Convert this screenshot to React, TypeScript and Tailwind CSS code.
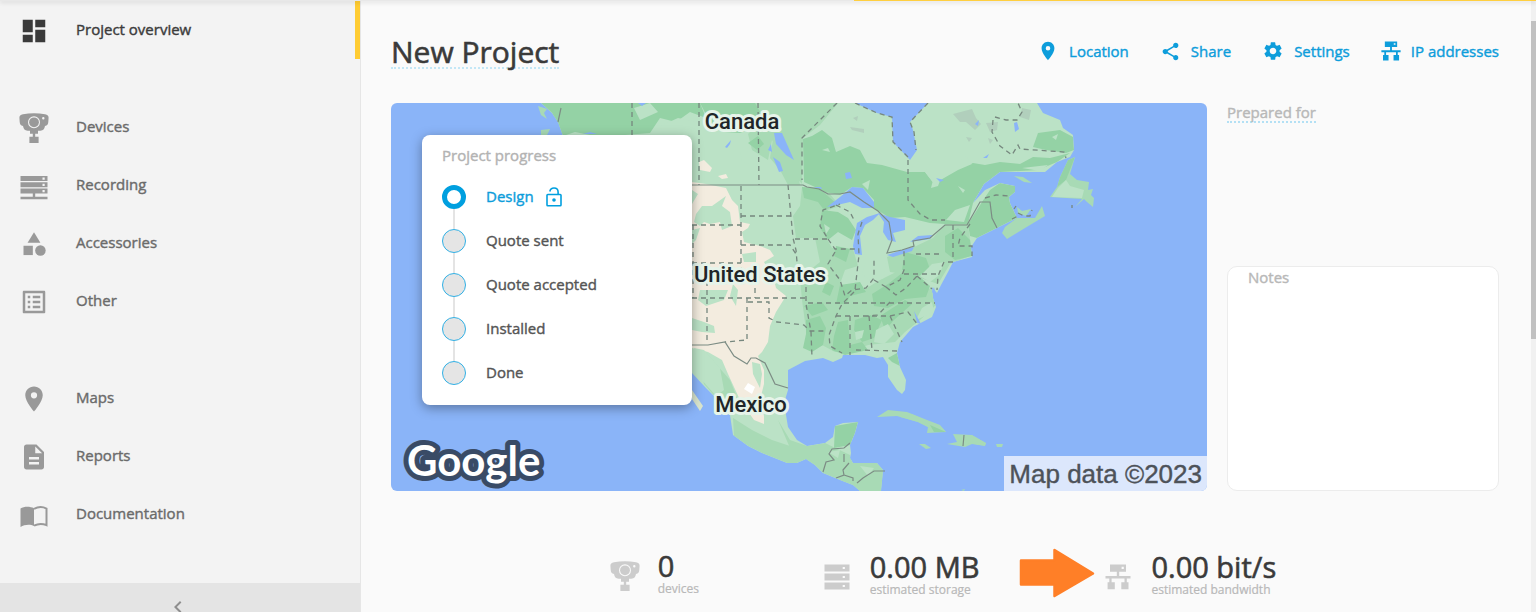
import type { ReactNode } from "react";
import {
  MdCategory,
  MdChevronLeft,
  MdDashboard,
  MdDescription,
  MdListAlt,
  MdPlace,
  MdSettings,
  MdShare,
} from "react-icons/md";

function CameraIcon({ className }: { className: string }) {
  return (
    <svg viewBox="0 0 30 30" className={className} fill="currentColor" aria-hidden="true">
      <path
        fillRule="evenodd"
        d="M4 1.200C11 0 19 0 26 1.200c2.500.5 3.700 1.500 3.600 3.600l-.3 4.200c-.2 2.400-1 3.600-3.300 4-.6 3.200-1.700 4.400-4.600 4.700H19v3.100h-2.800v3h3.400V30h-9.200v-6.200h3.400v-3H11v-3.100H8.600c-2.900-.3-4-1.500-4.600-4.700C1.700 12.600.9 11.400.7 9L.4 4.800C.3 2.700 1.500 1.700 4 1.200ZM15 3.300a6 6 0 1 0 0 12 6 6 0 0 0 0-12Zm9.300.7a1.200 1.200 0 1 0 0 2.400 1.200 1.200 0 0 0 0-2.400Z"
      />
      <circle cx="15" cy="9.300" r="4.900" />
    </svg>
  );
}

function RecorderIcon({ className }: { className: string }) {
  return (
    <svg viewBox="0 0 28 26" className={className} fill="currentColor" aria-hidden="true">
      <path
        fillRule="evenodd"
        d="M.5 1h27v5H.5Zm22 1.500V4.700h2.200V2.500ZM.5 7.300h27v5H.5Zm22 1.500V11h2.200V8.800ZM.5 13.500h27v5H15.200v3.300h12.300v2.400H.5v-2.400h12.300v-3.300H.5Zm22 1.500v2.200h2.200V15Z"
      />
    </svg>
  );
}

function StorageIcon({ className }: { className: string }) {
  return (
    <svg viewBox="0 0 26 26" className={className} fill="currentColor" aria-hidden="true">
      <path
        fillRule="evenodd"
        d="M.5.5h25v7H.5Zm18.200 2.400v2.200h2.200V2.900ZM.5 9.500h25v7H.5Zm18.200 2.400v2.200h2.200v-2.200ZM.5 18.500h25v7H.5Zm18.200 2.400v2.200h2.200v-2.200Z"
      />
    </svg>
  );
}

function NetworkIcon({ className }: { className: string }) {
  return (
    <svg viewBox="0 0 26 26" className={className} fill="currentColor" aria-hidden="true">
      <path
        fillRule="evenodd"
        d="M5 .5h16v7.300h-6.800v4.300h11.300V14.500h-3.700v3.800h1.700v7h-7.200v-7h3.200v-3.800H6.600v3.800h3.200v7H2.600v-7h1.700v-3.800H.5v-2.400h11.300V7.800H5Zm11.600 2.300v2.200h2.200V2.800Z"
      />
    </svg>
  );
}

function BookIcon({ className }: { className: string }) {
  return (
    <svg viewBox="0 0 28 22" className={className} aria-hidden="true">
      <path fill="currentColor" d="M.5 2.500C4 .3 10 .2 14 2.300V20C10 17.900 4.500 18.500.5 21Z" />
      <path
        fill="none"
        stroke="currentColor"
        strokeWidth="2"
        d="M14 2.800c4-2 9-2 12.500-.2v16.600c-4-1.800-8.500-1.600-12.500.4"
      />
    </svg>
  );
}

function OpenLockIcon({ className }: { className: string }) {
  return (
    <svg viewBox="0 0 16 20" className={className} fill="none" stroke="currentColor" strokeWidth="1.600" aria-hidden="true">
      <rect x="1" y="7.500" width="14" height="11.200" rx=".8" />
      <path d="M3.800 4.500C4.300 2.200 6 1 8 1c2.400 0 4.100 1.600 4.100 3.900v2.600" />
      <circle cx="8" cy="13" r="1.800" fill="currentColor" stroke="none" />
    </svg>
  );
}

type Item = { label: string; icon: ReactNode };

const groups: Item[][] = [
  [
    { label: "Devices", icon: <CameraIcon className="size-[30px]" /> },
    { label: "Recording", icon: <RecorderIcon className="mt-1 h-[26px] w-7" /> },
    { label: "Accessories", icon: <MdCategory className="size-7" /> },
    { label: "Other", icon: <MdListAlt className="size-[30px]" /> },
  ],
  [
    { label: "Maps", icon: <MdPlace className="size-[30px]" /> },
    { label: "Reports", icon: <MdDescription className="size-[30px]" /> },
    { label: "Documentation", icon: <BookIcon className="mt-1 h-[22px] w-7" /> },
  ],
];

function NavLink({ item, active = false }: { item: Item; active?: boolean }) {
  return (
    <a
      href="#"
      className={
        active
          ? "flex h-[58px] items-center border-r-5 border-[#ffcc33] pb-0.5 text-[#3c3c3c]"
          : "flex h-[58px] items-center pb-0.5 text-[#6b6b6b]"
      }
    >
      <span
        className={
          active
            ? "flex w-[68px] justify-center pt-1 text-[#3a3a3a]"
            : "flex w-[68px] justify-center pt-1 text-[#999999]"
        }
      >
        {item.icon}
      </span>
      <span className="pl-2">{item.label}</span>
    </a>
  );
}

const lightLand =
  "M541 103 552 113 558 122 563 136 600 240 692 373 705 387 718 400 730 415 733 435 748 446 762 453 787 463 797 463 806 459 815 465 823 473 840 480 853 485 860 491H881L883 470 877 463H853L850 458 851 453 850 445 855 433 858 422 843 423 835 426 833 437 825 443 807 446 797 440 788 427 786 415 785 400 788 390V370L805 361 823 358 833 362 842 358 843 355H865L877 358 883 357 888 365V377L897 390 902 394 905 390 906 380 900 367 897 353 900 342 913 327 932 317 936 307 933 298 932 287 937 293 941 285 948 272 953 262 972 257 971 247 977 238 997 228 1017 218 1010 203 1009 197 1015 192V186L1000 183 985 190 973 203 984 184 1000 172H1045L1057 162 1070 157 1074 150 1073 135 1063 128 1060 120 1043 113 1037 103H928L910 122 913 130 917 150 910 160 893 142 892 117 877 113 855 103Z";

const islands = [
  "M1002 233 1005 227 1017 218H1035L1042 206 1045 216 1025 228 1007 239Z",
  "M1017 207 1022 211 1031 209 1026 216 1018 213Z",
  "M1014 176 1023 177 1032 183 1024 182Z",
  "M1068 160 1075 157 1070 174 1077 180 1089 182 1088 190 1093 189 1091 195 1094 198 1093 207 1087 202 1084 199 1075 207 1082 199 1050 197 1057 187 1060 177Z",
  "M877 417 888 410 907 412 927 420 940 425 946 432 927 433 928 427 918 422 897 416Z",
  "M919 444H925L931 448 926 449Z",
  "M953 434 972 435 986 443 985 446 972 444 965 447 947 444 957 442Z",
  "M996 444H1003L1002 447H997Z",
  "M538 106 547 109 544 113 547 119 541 115Z",
  "M541 130 550 129 547 135H541Z",
  "M961 490 965 489 964 491Z",
];

const midGreen = [
  "M755 103H838L820 125 803 138 802 184 780 160 772 140 768 160 752 150 748 134 756 126Z",
  "M774 133 790 140 800 185 788 185 780 170 770 158Z",
  "M802 187 824 187 840 206 828 210 822 230 832 248 853 249 858 266 845 270 840 284 860 292 880 280 900 270 921 284 932 290 936 305 920 320 905 332 895 342 868 345 850 352 835 352 822 345 806 330 802 300 800 278 820 262 815 238 796 238 793 216 800 206Z",
  "M887 257 914 247 933 238 945 224 968 224 972 255 950 264 938 284 912 275 890 272Z",
  "M733 418 752 430 772 440 790 446 806 459 797 463 787 463 762 453 748 446 734 436Z",
  "M778 420 790 440 807 446 825 443 850 455 853 463 877 463 884 470 881 491H860L840 480 823 473 806 459 790 448Z",
  "M696 350 702 348 730 380 742 410 733 415 718 400 704 384Z",
  "M725 275 735 285 738 300 727 292Z",
  "M692 318 712 326 714 332 692 330Z",
  "M710 290H728L722 302 710 306Z",
  "M897 418 912 414 930 422 942 427 946 432 930 428Z",
  "M972 435 986 443 985 446 968 443Z",
  "M1040 141 1058 135 1070 140 1060 150 1045 150Z",
];

const darkGreen = [
  "M541 103H700L706 118 690 112 676 122 660 118 650 133 600 137 575 132 563 136 552 113Z",
  "M700 103H755L762 115 756 126 740 133 725 132 712 126Z",
  "M803 139 812 136 822 130 832 138 836 152 850 146 860 150 867 163 882 165 907 172 925 172 933 182 943 178 960 168 973 163 985 165 1000 162 1020 164 1033 157 1050 158 1070 153 1057 162 1038 170 1000 172 984 184 973 203 968 224 945 224 930 223 905 217 890 218 874 208 874 200 863 188 852 187 840 195 825 192 815 187 804 182Z",
  "M1038 133 1060 130 1073 137 1074 150 1066 153 1046 150 1033 147Z",
  "M968 224 982 202 990 190 1000 183 1015 186 1015 192 1009 197 1010 203 1017 218 997 228 977 238 970 236Z",
  "M802 187 820 189 838 205 824 210 818 202 804 198Z",
  "M822 210 838 212 848 218 856 230 852 240 838 232 828 240 820 228Z",
  "M836 246 850 249 846 262 834 256Z",
  "M806 320 820 316 826 328 823 345 812 352 803 348 806 334Z",
  "M838 322 848 320 850 345 862 342 868 350 845 355 832 350 834 336Z",
  "M855 320 870 315 882 320 874 338 862 342 854 330Z",
  "M840 285 860 282 866 292 850 296 846 304 836 304Z",
  "M872 294 888 284 906 270 921 278 930 286 926 297 905 299 888 308 874 306Z",
  "M880 316 905 300 912 304 894 320 885 330Z",
  "M905 252 926 258 931 272 918 276 902 270Z",
  "M945 236 958 228 970 240 972 256 955 260 945 252Z",
  "M835 426 858 422 855 433 850 445 834 448Z",
  "M888 358 897 353 900 366 892 362Z",
  "M1068 160 1075 157 1066 180 1057 187 1060 177Z",
  "M930 425 946 432 934 432Z",
  "M758 136 764 144 757 150 748 143Z",
  "M804 306 822 302 828 310 812 316Z",
  "M826 282 834 286 830 296 822 292Z",
];

const paleSpots = [
  "M634 108 650 103 658 112 640 120Z",
  "M660 126 678 118 698 122 700 136H664Z",
  "M740 150 754 152 750 164 742 162Z",
  "M822 150 828 148 830 152Z",
  "M933 180 941 178 938 186 931 188Z",
  "M958 186 965 190 963 193Z",
  "M946 220 955 210 970 205 964 222Z",
  "M920 276 932 264 945 262 938 276 930 282Z",
  "M916 320 922 308 932 302 934 312Z",
  "M855 332 864 330 862 338 856 340Z",
  "M876 330 888 324 894 334 884 344 874 342Z",
  "M862 184 870 180 868 190Z",
  "M866 262 886 262 884 278 872 282 862 274Z",
  "M1058 188 1066 180 1070 186 1084 190 1082 198 1052 197Z",
  "M1022 168 1048 165 1040 171Z",
  "M1052 137 1058 134 1056 140Z",
  "M824 224 830 228 826 234Z",
  "M850 204 862 206 858 212Z",
  "M893 138 903 142 896 144Z",
  "M828 452 840 450 838 458Z",
  "M860 466 874 468 868 476Z",
  "M925 172 932 160 944 166 958 162 966 156 972 164 958 170 944 178 934 184Z",
];

const desert = [
  "M692 182 706 184 726 188 732 200 738 206 740 222 750 224 748 228 742 232 744 242 760 246 770 250 774 256 764 262 774 280 776 288 786 296 776 312 770 326 768 342 762 352 758 356 764 370 764 384 760 400 764 416 764 424 754 420 740 400 728 374 722 360 708 352 692 348Z",
  "M699 162 704 160 712 168 710 172 700 170Z",
  "M718 176 726 174 728 178 722 179Z",
];

const desertBreaks = [
  "M692 190 698 194 692 204Z",
  "M696 214 702 206 712 206 726 196 722 206 730 212 732 226 722 230 720 222 710 224 704 222 700 226 694 222Z",
  "M692 230 700 228 696 240 692 244Z",
  "M700 290H728L724 300 706 306 698 300Z",
  "M733 284 738 290 736 306 730 296Z",
  "M692 318 704 322 714 326 715 333 702 332 692 330Z",
  "M694 348 704 350 720 368 724 390 716 396 700 378Z",
  "M752 362 760 364 762 374 760 388 753 374Z",
  "M742 254 756 252 756 262 744 262Z",
];

const lakes = [
  "M827 207 840 197 852 187 863 188 874 202V208H862L850 202 837 205Z",
  "M853 246 857 223 867 217 880 213 873 220 865 225 860 236 862 255 855 254Z",
  "M878 213 890 217 905 220V230L893 233 896 242 888 240 883 232 884 222Z",
  "M887 255 902 250 914 247 912 251 893 257Z",
  "M910 242 918 236 933 235 930 239Z",
  "M774 133 782 133 794 160 786 155 776 144Z",
  "M773 157 780 162 783 171 779 172Z",
  "M768 150 771 144 772 152Z",
  "M725 147 731 140 730 144 727 148Z",
  "M845 173 850 172 852 178 846 179Z",
  "M813 187 821 187 822 189Z",
  "M975 124 979 120 978 126Z",
  "M1014 123 1017 122 1019 129 1015 132Z",
  "M936 178 944 180 940 182Z",
  "M983 158 989 154 987 158Z",
  "M638 103H646L642 106Z",
  "M583 134 590 132 597 134Z",
  "M914 311 921 324 917 323Z",
  "M934 287 936 296 932 292Z",
];

const hills = [
  "M953 114 972 109 976 118 981 124 975 130 966 122 960 122Z",
  "M986 123 998 122 997 130 990 132Z",
  "M1022 108 1031 110 1029 120 1020 117Z",
  "M966 137 972 138 969 142Z",
  "M988 138 993 140 990 144Z",
  "M850 127 864 129 864 133 852 130Z",
  "M853 118 858 116 857 121Z",
];

const nationalBorders =
  "M692 185H803L807 187 813 188 819 189 828 194H840L850 192 864 202 878 211 889 222 892 240 887 253 902 250 914 246 913 241 930 238 945 225H967L980 202H990L992 218 997 228M692 345H708L725 342 734 356 747 364 751 358 756 358 765 363 775 384 788 388M558 122 561 108M850 443 844 448 832 449 829 454 834 460 826 462 823 472M844 454V462M849 463 843 470 844 475 836 478M844 475 853 478V481M857 483 863 478 874 471H885M964 435 963 446";

const stateBorders =
  "M632 103V135M699 103V185M758 103 759 185M837 103 802 138V180M908 160V200L920 214 931 220H945M741 186V268M741 216H792M788 185 793 238 796 250 797 262M692 225H741M741 245H790L796 254M693 225V298M692 263H741M755 270V298M692 298H806M806 278V304L811 332 812 358M707 263V344M747 298V340L725 342M748 302H769V318L777 322 804 325 810 331H826M795 239H828L820 226 823 210 840 204M828 239 835 249H858M862 222 858 234 859 255 855 290M836 205 850 212 854 220M835 252 828 264 840 280 845 296 852 290 866 288 874 278V257M874 280 886 287 900 280 904 270V250M904 274H937M886 287 896 295 906 288 917 276M808 303H935M854 292 842 304 836 316 829 335 830 346 842 353M836 316H890L908 312 918 325M850 316V355M869 316 872 350M856 350 898 351M890 316 902 342M890 302 878 315 866 316M916 254H941M953 225V260M970 224 960 238 958 246H972V256M953 262 944 262 938 276 937 290M917 276 932 289M855 103 877 113 892 117 893 142 908 157M928 103 910 122 914 132 916 150M993 120 992 132 1000 146 1012 155 1018 145 1020 149 1064 152 1066 158M995 117 1006 120 1017 120 1022 112 1018 103M985 198 996 195 1009 196M1016 206 1014 209M1018 213 1024 216 1030 216 1032 210M1012 219 1018 216M1072 205V208";

function NorthAmericaMap() {
  return (
    <svg
      viewBox="391 103 816 388"
      preserveAspectRatio="xMinYMin slice"
      className="h-full w-full"
      role="img"
      aria-label="Map of North America"
    >
      <defs>
        <clipPath id="land">
          <path d={lightLand} />
          {islands.map((d) => (
            <path key={d} d={d} />
          ))}
        </clipPath>
      </defs>
      <rect x="391" y="103" width="816" height="388" fill="#8ab4f8" />
      <path d={lightLand} fill="#bbe2c6" />
      <path d={islands.join("")} fill="#a8dab5" />
      <g clipPath="url(#land)">
        <path d={midGreen.join("")} fill="#a8dab5" />
        {darkGreen.map((d) => (
          <path key={d} d={d} fill="#94d2a5" />
        ))}
        <path d={paleSpots.join("")} fill="#bbe2c6" />
        <path d={desert.join("")} fill="#f3ecdf" />
        <path d={desertBreaks.join("")} fill="#bbe2c6" />
        <path d="M748 383 755 387 752 394 744 389Z" fill="#fff" />
        <path d={hills.join("")} fill="#b1cfbc" />
      </g>
      <path d="M692 390 703 406 700 411 692 399Z" fill="#d9e5cd" />
      <path d={lakes.join("")} fill="#8ab4f8" />
      <path d={stateBorders} fill="none" stroke="#76877e" strokeWidth="1.300" strokeDasharray="5 4" />
      <path d={nationalBorders} fill="none" stroke="#7c8c84" strokeWidth="1.200" />
      <g
        className="font-[Roboto,sans-serif] text-[22px] font-medium"
        fill="#202528"
        stroke="#e6f4ea"
        strokeWidth="6"
        strokeLinejoin="round"
        paintOrder="stroke"
        textAnchor="middle"
      >
        <text x="742" y="129">Canada</text>
        <text x="760" y="282">United States</text>
        <text x="751" y="412">Mexico</text>
      </g>
    </svg>
  );
}

const steps = ["Quote sent", "Quote accepted", "Installed", "Done"];

function ProgressCard() {
  return (
    <section className="absolute top-8 left-[31px] h-[270px] w-[270px] rounded-lg bg-white px-5 pt-2.5 shadow-[0_3px_12px_rgba(0,0,0,0.35)]">
      <h2 className="leading-5 text-[#b3b3b3]">Project progress</h2>
      <ol className="mt-5">
        <li className="flex h-11 items-start">
          <span className="flex h-11 w-6 flex-col items-center">
            <span className="size-6 shrink-0 rounded-full border-5 border-[#009fdf] bg-white" />
            <span className="w-0.5 flex-1 bg-[#e4e4e4]" />
          </span>
          <span className="pl-5 leading-[23px] text-[#0d9ddb]">Design</span>
          <OpenLockIcon className="mt-0.5 ml-3 h-5 w-4 text-[#009fdf]" />
        </li>
        {steps.map((step, i) => (
          <li key={step} className="flex h-11 items-start">
            <span className="flex h-11 w-6 flex-col items-center">
              <span className="size-6 shrink-0 rounded-full border border-[#30b0e5] bg-[#e5e5e5]" />
              {i < steps.length - 1 && <span className="w-0.5 flex-1 bg-[#e4e4e4]" />}
            </span>
            <span className="pl-5 leading-[23px] text-[#555555]">{step}</span>
          </li>
        ))}
      </ol>
    </section>
  );
}

function Stat({ icon, value, label }: { icon: ReactNode; value: string; label: string }) {
  return (
    <div className="flex items-center gap-[18px]">
      <span className="flex w-[30px] justify-center pt-1 text-[#cccccc]">{icon}</span>
      <div>
        <p className="text-[29px] leading-[30px] text-[#3a3a3a] [-webkit-text-stroke-width:0.6px]">{value}</p>
        <p className="text-xs leading-4 text-[#b8b8b8] [-webkit-text-stroke-width:0.2px]">{label}</p>
      </div>
    </div>
  );
}

const actions: Item[] = [
  { label: "Location", icon: <MdPlace className="size-[22px]" /> },
  { label: "Share", icon: <MdShare className="size-[21px]" /> },
  { label: "Settings", icon: <MdSettings className="size-[22px]" /> },
  { label: "IP addresses", icon: <NetworkIcon className="size-[20px]" /> },
];

export default function App() {
  return (
    <div className="flex h-screen flex-col overflow-hidden bg-[#fafafa] font-['Open_Sans','Noto_Sans',sans-serif] text-[15px] [-webkit-text-stroke-width:0.4px]">
      <div className="z-10 flex h-px shrink-0 bg-[#e8e8e8] shadow-[0_1px_4px_rgba(0,0,0,0.3)]">
        <span className="ml-auto h-px w-[682px] bg-[#ffcf40]" />
      </div>
      <div className="flex min-h-0 flex-1">
        <aside className="flex w-[361px] shrink-0 flex-col border-r border-[#e6e6e6] bg-[#f3f3f3]">
          <nav className="flex flex-col gap-[39px]">
            <NavLink active item={{ label: "Project overview", icon: <MdDashboard className="size-[30px]" /> }} />
            {groups.map((group) => (
              <div key={group[0].label}>
                {group.map((item) => (
                  <NavLink key={item.label} item={item} />
                ))}
              </div>
            ))}
          </nav>
          <button
            type="button"
            aria-label="Collapse menu"
            className="mt-10 flex h-12 shrink-0 items-center justify-center bg-[#e4e4e4] pr-1 text-[#8e8e8e]"
          >
            <MdChevronLeft className="size-6" />
          </button>
        </aside>

        <main className="min-w-0 flex-1 pr-8 pl-[30px]">
          <header className="flex items-start justify-between pt-9">
            <h1 className="border-b-2 border-dotted border-[#c3e7f6] text-[30px] leading-[30px] text-[#3a3a3a] [-webkit-text-stroke-width:0.6px]">
              New Project
            </h1>
            <nav className="flex gap-[31px] pt-[3px]">
              {actions.map((action) => (
                <a key={action.label} href="#" className="flex items-center gap-2.5 text-[#0d9ddb]">
                  {action.icon}
                  {action.label}
                </a>
              ))}
            </nav>
          </header>

          <div className="mt-[34px] flex gap-5">
            <div className="relative h-[388px] min-w-0 flex-1 overflow-hidden rounded-md">
              <NorthAmericaMap />
              <ProgressCard />
              <svg viewBox="0 0 160 60" className="absolute bottom-0 left-2 h-[60px] w-[160px]" role="img" aria-label="Google">
                <text
                  x="8"
                  y="45"
                  className="font-[Lato,sans-serif] text-[42px] font-bold"
                  fill="#fff"
                  stroke="#394b66"
                  strokeWidth="10"
                  strokeLinejoin="round"
                  paintOrder="stroke"
                >
                  Google
                </text>
              </svg>
              <p className="absolute right-0 bottom-0 bg-[#dce7fc] px-[5px] pt-0.5 font-['Liberation_Sans',sans-serif] text-[26px] leading-[33px] text-[#4d5259]">
                Map data ©2023
              </p>
            </div>

            <div className="flex w-[272px] shrink-0 flex-col justify-between">
              <button
                type="button"
                className="self-start border-b-2 border-dotted border-[#b3e0f4] leading-[18px] text-[#b8b8b8]"
              >
                Prepared for
              </button>
              <div className="flex h-[225px] flex-col rounded-[10px] border border-[#ececec] bg-white px-5">
                <label htmlFor="notes" className="leading-5 text-[#b8b8b8]">
                  Notes
                </label>
                <textarea id="notes" className="flex-1 resize-none text-[#555555] outline-none" />
              </div>
            </div>
          </div>

          <div className="mt-[60px] flex justify-center pr-1">
            <div className="flex">
              <div className="w-[212px]">
                <Stat icon={<CameraIcon className="size-[30px]" />} value="0" label="devices" />
              </div>
              <Stat icon={<StorageIcon className="size-[26px]" />} value="0.00 MB" label="estimated storage" />
              <svg viewBox="0 0 76 50" className="mt-[-3px] mr-2 ml-10 h-[50px] w-[76px] shrink-0" aria-hidden="true">
                <path
                  d="M2 12.500H35.500V2L74 25.500 35.500 48V36.500H2Z"
                  fill="#ff7f27"
                  stroke="#ff7f27"
                  strokeWidth="2.500"
                  strokeLinejoin="round"
                />
              </svg>
              <Stat icon={<NetworkIcon className="size-[26px]" />} value="0.00 bit/s" label="estimated bandwidth" />
            </div>
          </div>
        </main>

        <div className="w-[5px] shrink-0 bg-[#f1f1f1] pt-5" aria-hidden="true">
          <div className="h-[318px] bg-[#c1c1c1]" />
        </div>
      </div>
    </div>
  );
}
